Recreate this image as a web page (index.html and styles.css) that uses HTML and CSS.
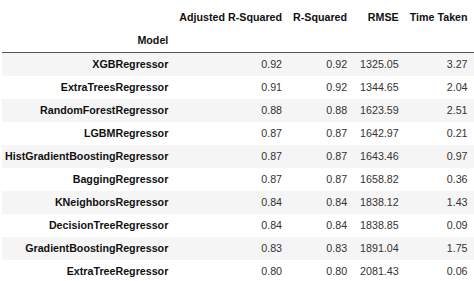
FILE: index.html
```html
<!DOCTYPE html>
<html>
<head>
<meta charset="utf-8">
<link rel="stylesheet" href="styles.css">
</head>
<body>
<table class="df">
  <thead>
    <tr>
      <th class="blank"></th>
      <th>Adjusted R-Squared</th>
      <th>R-Squared</th>
      <th>RMSE</th>
      <th>Time Taken</th>
    </tr>
    <tr>
      <th>Model</th>
      <th></th>
      <th></th>
      <th></th>
      <th></th>
    </tr>
  </thead>
  <tbody>
    <tr><th>XGBRegressor</th><td>0.92</td><td>0.92</td><td>1325.05</td><td>3.27</td></tr>
    <tr><th>ExtraTreesRegressor</th><td>0.91</td><td>0.92</td><td>1344.65</td><td>2.04</td></tr>
    <tr><th>RandomForestRegressor</th><td>0.88</td><td>0.88</td><td>1623.59</td><td>2.51</td></tr>
    <tr><th>LGBMRegressor</th><td>0.87</td><td>0.87</td><td>1642.97</td><td>0.21</td></tr>
    <tr><th>HistGradientBoostingRegressor</th><td>0.87</td><td>0.87</td><td>1643.46</td><td>0.97</td></tr>
    <tr><th>BaggingRegressor</th><td>0.87</td><td>0.87</td><td>1658.82</td><td>0.36</td></tr>
    <tr><th>KNeighborsRegressor</th><td>0.84</td><td>0.84</td><td>1838.12</td><td>1.43</td></tr>
    <tr><th>DecisionTreeRegressor</th><td>0.84</td><td>0.84</td><td>1838.85</td><td>0.09</td></tr>
    <tr><th>GradientBoostingRegressor</th><td>0.83</td><td>0.83</td><td>1891.04</td><td>1.75</td></tr>
    <tr><th>ExtraTreeRegressor</th><td>0.80</td><td>0.80</td><td>2081.43</td><td>0.06</td></tr>
  </tbody>
</table>
</body>
</html>
```
FILE: styles.css
```css
html, body {
  margin: 0;
  padding: 0;
  background: #ffffff;
}
body {
  padding: 6px 0 0 2px;
  font-family: "Liberation Sans", Arial, sans-serif;
}
.df {
  border-collapse: collapse;
  border-spacing: 0;
  font-size: 10.7px;
  line-height: 13px;
  color: #1a1a1a;
}
.df th,
.df td {
  padding: 5px 5.5px;
  text-align: right;
  vertical-align: middle;
  white-space: nowrap;
}
.df thead th:first-child,
.df tbody th {
  padding-left: 3px;
}
.df tr > :nth-child(4) {
  padding-left: 7.5px;
}
.df tr > :last-child {
  padding-right: 7px;
}
.df th {
  font-weight: bold;
  color: #111;
}
.df td {
  color: #333;
}
.df thead {
  border-bottom: 1px solid #555;
}
.df tbody tr:nth-child(odd) {
  background: #f5f5f5;
}
```
